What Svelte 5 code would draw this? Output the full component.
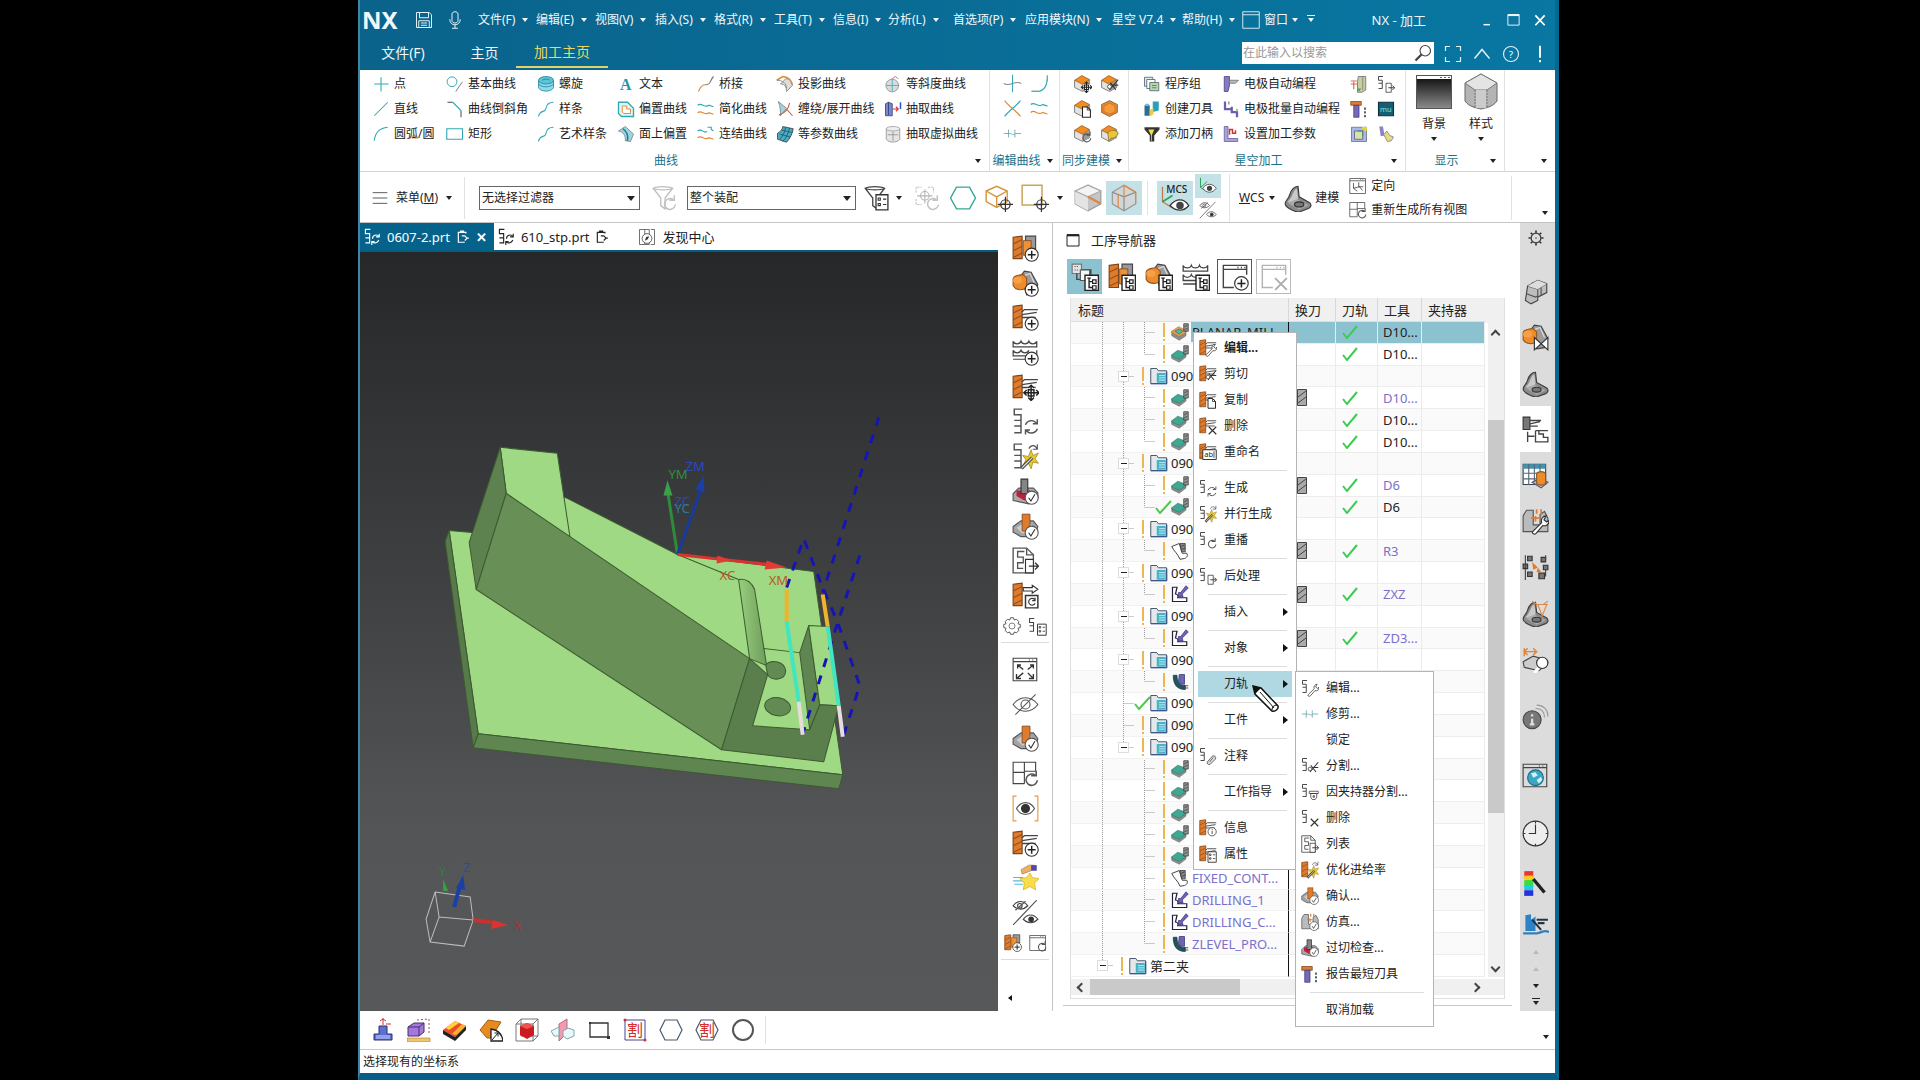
<script lang="ts">
  /**
   * App.svelte - CAM workbench: ribbon, part viewport, operation navigator
   * and the operation context menu with its tool path submenu.
   *
   * Icons are built from small shared parts on a 24 x 24 grid, so that
   * "tool lines plus" is a cutter with feed lines and a plus badge.
   */
  const parts: Record<string, string> = {
    // badges
    plus: '<circle cx="17.5" cy="17.5" r="5.8" fill="#fff" stroke="#333"/><path d="M17.5 14v7M14 17.5h7" stroke="#222" stroke-width="1.3"/>',
    check: '<circle cx="17.5" cy="17.5" r="5.8" fill="#fff" stroke="#555"/><path d="M14.8 17.5l2 3 3.6-6" stroke="#333"/>',
    info: '<circle cx="17.5" cy="17" r="5.5" fill="#fff" stroke="#333"/><path d="M17.5 13.5v1.5M17.5 16v4" stroke="#222"/>',
    cross: '<path d="M13 13l10 10M23 13L13 23" stroke="#333" stroke-width="1.6"/>',
    move: '<path d="M17 9.5l7 7-7 7-7-7z" fill="#fff"/><path d="M17 10v13.500M10.500 16.700h13.500M14.500 12.500l2.500-2.500 2.500 2.500M14.500 21l2.500 2.500 2.500-2.500M13 14.200l-2.500 2.500 2.500 2.500M21.500 14.200l2.500 2.500-2.500 2.500M14.500 14v5.500h5V14z" stroke="#222" stroke-width="1.3"/>',
    struct: '<path d="M12 10.500h11.500v13H12z" fill="#fff" stroke="#222" stroke-width="1.200"/><path d="M14 13h3M15.500 13v8h3M15.500 16h3" stroke="#222" stroke-width="1.200"/><path d="M18.500 14.500h3v3h-3zM18.500 19.500h3v3h-3z" stroke="#222"/>',
    page: '<path d="M12 10h6l4 4v9H12z" fill="#fff" stroke="#222" stroke-width="1.300"/><path d="M18 10v4h4" stroke="#222"/>',
    list: '<path d="M12 9h11v14H12z" fill="#fff" stroke="#333" stroke-width="1.200"/><path d="M14 12h2v2h-2zM14 17h2v2h-2zM18.500 13h3M18.500 18h3" stroke="#333"/>',
    name: '<path d="M5 9h18v13H5z" fill="#fff" stroke="#222" stroke-width="1.200"/><text x="7" y="19" font-size="10" fill="#222" stroke="none">ab</text><path d="M20 11v9" stroke="#222"/>',
    redo: '<path d="M22 14a5.500 5.500 0 0 0-10 1M22.500 10v4h-4M12.500 19.500a5.500 5.500 0 0 0 10-1M12 23.500v-4h4" stroke="#555" stroke-width="1.3"/>',
    turn: '<path d="M20.500 13.500a5 5 0 1 0 2 4.500M21.500 9.500v4.500h-4.500" stroke="#555" stroke-width="1.4"/>',
    swap: '<path d="M10 5h8V3l5 3.500L18 10V8h-8z" fill="#fff" stroke="#333"/><path d="M12 12h11v11H12z" fill="#fff" stroke="#333" stroke-width="1.300"/><path d="M20 15.500a3 3 0 1 0 .5 3.500M20.500 14v2.500H18" stroke="#333"/>',
    wrench: '<path d="M9.500 21l8-8c-1-3 1-6 4-6l-2 3.500 2.500 2 2-1.500c0 4-3 5.500-5.500 4.500l-6 7c-1.500 1.500-4 0-3-1.500z" fill="#fff" stroke="#333"/>',
    knife: '<path d="M12 20L23 7M15 14h8M13 11l7 9" stroke="#333" stroke-width="1.4"/><circle cx="12" cy="16" r="2.500" fill="#fff" stroke="#333"/>',
    out: '<path d="M12 11h7v12h-7z" fill="#fff" stroke="#333"/><path d="M15 17h8.500M20.500 14l3 3-3 3" stroke="#333" stroke-width="1.200"/>',
    spark: '<path d="M17 6l1.500 5 5-2-3 5 3 4-5-1-1.500 6-2.500-5-5 2 3-5-3-4 5 1z" fill="#e8c930" stroke="#967a10" stroke-width=".6"/><path d="M8.500 22.500L18 13" stroke="#444" stroke-width="3"/><path d="M9 22l9-9" stroke="#ddd" stroke-width="1.200"/><path d="M15 5c2-4 6-3 7 0M22.500 1v4.500h-4" stroke="#555"/>',
    holder: '<path d="M11 11h12v3H11zM13 14h8v5l-2 3h-4l-2-3zM16 17h2v2h-2z" fill="#fff" stroke="#333"/>',
    clip: '<path d="M11 20l7-8c3-1 5 1 4 4l-7 7c-3 1-5-1-4-3z" fill="#ddd" stroke="#444"/><path d="M14 20l5-6" stroke="#444"/>',
    target: '<circle cx="17.500" cy="17.500" r="4" stroke="#333"/><path d="M17.500 11v13M11 17.500h13" stroke="#333"/>',
    // bodies
    tool: '<path d="M1 2l8-1v20H1z" fill="#df7b2c" stroke="#7d451b"/><path d="M1 8l8-4M1 14l8-4M1 20l8-4" stroke="#94501d"/>',
    grip: '<path d="M12 1h9v11h-9z" fill="#9a9a9a" stroke="#444"/><path d="M10 5h7v13h-7z" fill="#ee9236" stroke="#7d451b" stroke-width=".7"/>',
    lines: '<path d="M9 7L11 5h12M9 9.500l13-2M9 12h12" stroke="#444" stroke-width="1.200"/>',
    snake: '<path d="M9 1H2v5h6v5H2M8 11v5H2M8 16v6H2" stroke="#555" stroke-width="1.300"/>',
    mini: '<path d="M8 2H2v5h5v4H2M7 11v7H2" stroke="#444" stroke-width="1.300"/>',
    waves: '<path d="M1 2v5h21V2M1 2c1 3 6 3 7 0 1 3 6 3 7 0 1 3 6 3 7 0M1 10v5h21v-5M1 10c1 3 6 3 7 0 1 3 6 3 7 0M1 18h11" stroke="#444" stroke-width="1.100"/>',
    solid: '<path d="M8 5l3-4 6 1 6 11-3 8-7 1z" fill="#9c9c9c" stroke="#444"/><path d="M11 5l5-2 4 9" fill="none" stroke="#ddd"/><path d="M1 8c0-3 9-5 10-3l2 2v8c-2 3-9 4-12-1z" fill="#ee8c2c" stroke="#98551b"/><ellipse cx="5" cy="9" rx="4" ry="3" fill="#f6a04a"/>',
    cut: '<path d="M1 14l5-5h13l4 4v5l-8 5-14-3z" fill="#aaa" stroke="#555"/><path d="M4 11h12v7l-5 2-7-4z" fill="#c01f3c"/><path d="M8 1h6v13H8z" fill="#858585" stroke="#333"/>',
    verify: '<path d="M1 12l7-5h11l4 5-3 9H8l-7-4z" fill="#a4a4a4" stroke="#555"/><path d="M4 13l5-3h8l3 4-3 4H9z" fill="#ccc"/><path d="M9 1h7v15H9z" fill="#df7b2c" stroke="#7d451b" stroke-width=".7"/>',
    report: '<path d="M1 1h12l6 6v16H1z" fill="#fff" stroke="#555" stroke-width="1.200"/><path d="M11 4H5v5h5v5H5v5h5M13 1v6h6" stroke="#555" stroke-width="1.200"/>',
    pages: '<path d="M1 1h8v8H1z" fill="#e4e4e4" stroke="#777"/><path d="M3 3h4M3 6h4" stroke="#555" stroke-dasharray="1 1"/><path d="M5 9v5h6M9 6h8v5" stroke="#444" stroke-width="1.200"/><path d="M8 6h8v9H8z" fill="#f5f5f5" stroke="#555"/>',
    frame: '<path d="M1 2h21v20H1z" stroke="#444" fill="none"/><path d="M1 5h21M15 3.500h1M18 3.500h1" stroke="#444"/>',
    window: '<path d="M22 10V2H2v19h9M2 5.500h20M14 3.800h1M17 3.800h1M20 3.800h1" stroke="#444" stroke-width="1.200"/>',
    arrows: '<path d="M5 11V8h3M4 16v4h4M19 16v4h-4M16 8h3v3M5 8l5 4M19 8l-5 4M4 20l6-5M19 20l-5-5" stroke="#333" stroke-width="1.200"/>',
    eye: '<path d="M1 12c6-8 16-8 22 0-6 8-16 8-22 0z" stroke="#555" fill="#fff"/><circle cx="12" cy="12" r="3.500" fill="#444" stroke="#555"/>',
    csyseye: '<path d="M2 1v13l6 4M2 14l9-8" stroke="#2aa35a" stroke-width="1.300"/><path d="M5 15c5-7 13-7 18 0-5 7-13 7-18 0z" stroke="#333" fill="#fff"/><circle cx="14" cy="15" r="3.500" fill="#444"/>',
    noeye: '<path d="M1 12c6-8 16-8 22 0-6 8-16 8-22 0z" stroke="#555"/><circle cx="12" cy="12" r="4" stroke="#555"/><path d="M3 21L21 3" stroke="#555"/>',
    eyes: '<path d="M1 6c4-5 9-5 13 0-4 4-9 4-13 0zM10 18c4-5 9-5 13 0-4 4-9 4-13 0z" stroke="#444"/><circle cx="7" cy="6" r="2" stroke="#444"/><circle cx="17" cy="18" r="2" fill="#333" stroke="#333"/><path d="M1 23L22 1M3 10L12 2" stroke="#555"/>',
    bracket: '<path d="M4 1H1v22h3M20 1h3v22h-3" stroke="#df9b48"/><path d="M4 12c4-7 12-7 16 0-4 7-12 7-16 0z" stroke="#555"/><circle cx="12" cy="12" r="3.500" fill="#333" stroke="#333"/>',
    views: '<path d="M11 21H1V2h20v8M1 11h10M11 2v19M11 10h10" stroke="#444"/>',
    star: '<path d="M1 12h9M1 15h9M2 18h8" stroke="#53b9d8"/><path d="M16 8l2 4 6 1-4 4 1 6-5-3-6 3 1-6-4-4 6-1z" fill="#f8dc4a" stroke="#d6a91b" stroke-width=".6"/><path d="M8 5l7-4h5l-3 5-8 3z" fill="#e8b064" stroke="#987043" stroke-width=".5"/><path d="M17 1h5v5h-5z" fill="#5648a8"/>',
    gear: '<path d="M10 1h4l1 3 3-1 3 3-1 3 3 1v4l-3 1 1 3-3 3-3-1-1 3h-4l-1-3-3 1-3-3 1-3-3-1v-4l3-1-1-3 3-3 3 1z" stroke="#555" stroke-width="1.300"/><circle cx="12" cy="12" r="4" stroke="#555"/>',
    cog: '<circle cx="12" cy="12" r="6.500" stroke="#333" stroke-width="1.600"/><circle cx="12" cy="12" r="1" fill="#333"/><path d="M12 2v3M12 19v3M2 12h3M19 12h3M5 5l2 2M17 17l2 2M5 19l2-2M17 7l2-2" stroke="#333" stroke-width="2.200"/>',
    // tree
    folder: '<path d="M1 2h8l2 3h11v17H1z" fill="#e4e8ea" stroke="#37475c" stroke-width="1.200"/><path d="M9 8h12v13H9z" fill="#45b4c9"/><path d="M12 11.500h8M12 14.500h8M12 17.500h8" stroke="#e8fbff"/><path d="M22.500 6v16.500H1" stroke="#35599a" stroke-width="1.300"/>',
    mill: '<path d="M1 13v5l10 5 9-7v-5z" fill="#8c8c8c" stroke="#666" stroke-width=".7"/><path d="M1 13l8-6 11 4v2l-9 6-10-4z" fill="#3fa893" stroke="#39746a" stroke-width=".8"/><path d="M17 1h6v11h-6z" fill="#999" stroke="#333"/><path d="M18 5l4-2M18 9l4-2" stroke="#333"/>',
    plane: '<path d="M1 11v6l10 6 9-6v-6z" fill="#8c8c8c" stroke="#666" stroke-width=".7"/><path d="M1 11l9-6 10 5v3l-9 5-10-5z" fill="#e6a24e" stroke="#a06a2c" stroke-width=".8"/><path d="M5 11l6-3 5 3-5 4z" fill="#4db9a6" stroke="#39746a"/><path d="M17 1h6v10h-6z" fill="#999" stroke="#333"/><path d="M18 5l4-2M18 9l4-2" stroke="#333"/>',
    contour: '<path d="M1 6l10-4 4 13 6 0c2 3 0 6-3 7l-6 1C9 15 4 13 1 6z" fill="#fff" stroke="#333" stroke-width="1.200"/><path d="M12 2h7v11h-5z" fill="#888" stroke="#333"/><path d="M13 6l5-2M14 10l5-2" stroke="#333"/>',
    drill: '<path d="M2 3h6L6 12c3 0 4 3 3 5h12v5H2z" fill="#fff" stroke="#22203a" stroke-width="1.600"/><path d="M20 1l3 3-8 8 1 4-6 0 0-6 3 0z" fill="#6d62b8" stroke="#40357c"/>',
    zlevel: '<path d="M3 3c0 10 3 19 16 19v-5C11 17 8 11 8 3z" fill="#22545d" stroke="#173b46"/><path d="M11 2h7v13h-5l-3-4z" fill="#6b66ae" stroke="#3a3380"/><path d="M17 17h6M19 20h4" stroke="#222"/>',
    // ribbon
    point: '<path d="M12 3v19M3 12h19" stroke="#2fa9b5" stroke-width="1.400"/>',
    line: '<path d="M3 21L21 3" stroke="#2fa9b5" stroke-width="1.400"/>',
    arc: '<path d="M3 21C4 12 9 4 21 3" stroke="#2fa9b5" stroke-width="1.400"/>',
    basic: '<circle cx="8" cy="9" r="6.500" stroke="#2fa9b5" stroke-width="1.300"/><path d="M13 22L22 9" stroke="#555"/>',
    chamfer: '<path d="M2 3h7M20 14v9" stroke="#444" stroke-width="1.300"/><path d="M9 3l11 11" stroke="#2fa9b5" stroke-width="1.500"/>',
    rect: '<path d="M1 5h21v14H1z" stroke="#2fa9b5" stroke-width="1.500"/>',
    helix: '<path d="M2 8v9c3 6 17 6 20 0V8z" fill="#8cdce8" stroke="#167c94"/><ellipse cx="12" cy="7" rx="10" ry="5" fill="#5cc5d6" stroke="#167c94"/><path d="M2 12c4 5 16 5 20 0M7 7c2-2 9-2 10 0" stroke="#167c94"/>',
    spline: '<path d="M2 22c2-10 9-4 10-11C13 5 17 3 22 3" stroke="#2fa9b5" stroke-width="1.500"/>',
    text: '<text x="4" y="20" font-family="Liberation Serif" font-weight="700" font-size="21" fill="#2395a8" stroke="none">A</text>',
    offset: '<path d="M2 3h12l8 8v11H6l-4-4z" stroke="#2fa9b5" stroke-width="1.800" fill="#e3f6f7"/><path d="M7 8h6v4h5v6H9l-2-2z" stroke="#e08a38" stroke-width="1.300" fill="#fff"/>',
    face: '<path d="M2 8l9-6 11 10-4 10-7-1C12 14 8 9 2 8z" fill="#9fd6de" stroke="#777"/><path d="M8 5c6 5 7 9 6 16" stroke="#177a98" stroke-width="2"/>',
    bridge: '<path d="M2 22c2-4 3-9 9-9" stroke="#e08a38" stroke-width="1.500"/><path d="M11 13c8 0 6-6 11-11" stroke="#777" stroke-width="1.500"/>',
    simplify: '<path d="M1 7c5-5 9 5 15 0l6 2" stroke="#2fa9b5" stroke-width="1.500"/><path d="M1 17c5-5 9 5 15 0l6 2" stroke="#e08a38" stroke-width="1.500"/>',
    link: '<path d="M1 8c5-5 9 5 12 0M14 3h5v3l3 2" stroke="#2fa9b5" stroke-width="1.500"/><path d="M1 17c5-5 9 5 15 0l6 2" stroke="#e08a38" stroke-width="1.500"/>',
    project: '<path d="M6 12c6 0 8 4 8 10l8-8c0-6-4-9-9-9z" fill="#ddd" stroke="#777"/><path d="M1 7l8-5c7 1 12 5 12 11" stroke="#e08a38" stroke-width="2"/><path d="M1 7c8 0 13 4 13 11" stroke="#777"/>',
    wrap: '<path d="M3 2l11 9-8 10c0-6 0-12-3-19z" fill="#9fd6de" stroke="#777"/><path d="M4 20c9-3 13-8 14-16M14 12l8 9" stroke="#c95c3a" stroke-width="1.500"/>',
    iso: '<path d="M2 11c4-2 7-6 7-9l14 3c-1 6-4 13-9 18L2 19z" fill="#48abc1" stroke="#333"/><path d="M13 3c-1 6-4 12-8 16M18 4c-1 6-4 13-9 18M8 7l14 3M5 12l14 4" stroke="#1f4f65"/>',
    slope: '<circle cx="11" cy="14" r="8.500" fill="#d7dbdc" stroke="#888"/><path d="M3 14h17M11 5v17" stroke="#2fa9b5"/><path d="M11 5l4-3 4 3" stroke="#c84040"/>',
    extract: '<path d="M2 5l4-2 5 2v16H2z" fill="#7d89cc" stroke="#27356f"/><path d="M6 3v17" stroke="#27356f"/><path d="M12 12h7M16 9l3 3-3 3" stroke="#d33" stroke-width="1.500"/><path d="M22 3v9" stroke="#2a52d0" stroke-width="2"/>',
    virtual: '<path d="M3 5v14c3 5 15 5 18 0V5" fill="#e5e5e5" stroke="#888"/><ellipse cx="12" cy="5" rx="9" ry="3" fill="#eee" stroke="#999"/><path d="M12 9v12M5 13h14" stroke="#888"/>',
    trim: '<path d="M1 12c8 5 14-5 22 0" stroke="#888" stroke-width="1.300"/><path d="M12 1v22" stroke="#2fa9b5" stroke-width="1.300"/>',
    fillet: '<path d="M2 22h7c10 0 13-8 13-20" stroke="#2fa9b5" stroke-width="1.500"/><path d="M2 22h7M22 2v7" stroke="#999" stroke-width="1.500"/>',
    split: '<path d="M2 2c6 8 14 12 20 20" stroke="#e08a38" stroke-width="1.500"/><path d="M22 2C16 10 8 14 2 22" stroke="#2fa9b5" stroke-width="1.500"/>',
    length: '<path d="M1 12h7c4 0 4 3 8 0h7M7 7v10M15 7v10" stroke="#5f9ea2"/>',
    block: '<path d="M2 8v9l10 5 9-5V8z" fill="#e3e3e3" stroke="#666"/><path d="M12 12v10l9-5V8z" fill="#9d9d9d"/><path d="M2 8l9-6 10 5-9 6z" fill="#f08d22" stroke="#a35f1c"/>',
    hexa: '<path d="M2 7l10-5 10 5v10l-10 5-10-5z" fill="#e58a2d" stroke="#7d5a35"/><path d="M5 9l7-4 7 4v7l-7 3-7-3z" fill="#f79a3c" stroke="#c97125"/>',
    blend: '<path d="M10 11c4-4 9-4 13 0-1 5-5 7-9 7l-3 4z" fill="#e6c63a" stroke="#857222"/>',
    program: '<path d="M2 3h11v12H2z" fill="#dceaec" stroke="#456"/><path d="M5 6h11v12H5z" fill="#fff" stroke="#456"/><path d="M9 10h12v11H9z" fill="#b7d8a8" stroke="#456"/><path d="M12 14h6M12 17h6" stroke="#2b6f8f"/>',
    create: '<path d="M2 7h7v14H2z" fill="#2e6f8f"/><path d="M13 2h8v12l-8 2z" fill="#28a0b8"/><path d="M9 13l5-2v8l-5 3z" fill="#f2c84c"/><path d="M3 5h5v3H3z" fill="#7db7d4"/>',
    cone: '<path d="M2 3h20v3l-7 8v8H9v-8L2 6z" fill="#333"/><path d="M7 6h8l-3 7v8h-1v-7z" fill="#e9e34a"/>',
    elec: '<path d="M3 2h7v12l-2 8H3z" fill="#8878c0" stroke="#46397c"/><path d="M10 7h12l-4 4h-8z" fill="#bbb" stroke="#666"/>',
    batch: '<path d="M4 2v10h8M13 9v7h7v7" stroke="#6c60ae" stroke-width="3"/><path d="M9 2v4M20 12v4" stroke="#999" stroke-width="2"/>',
    setup: '<path d="M3 2h5v16h13v4H3z" stroke="#5f55a4" fill="#a9a2d8"/><path d="M10 13V6h4v5h4V7" stroke="#c33" stroke-width="2"/>',
    cabinet: '<path d="M11 2h10v18l-5 3h-6V9z" fill="#c9cda0" stroke="#666"/><path d="M17 2v18" stroke="#777"/><path d="M1 8h8M1 12h9M5 9v10" stroke="#d66a53" stroke-width="1.500"/><path d="M9 18l6 0-3 4z" fill="#3cab4c"/>',
    bolt: '<path d="M1 2h14v5H1z" fill="#df7b2c" stroke="#7d451b"/><path d="M5 7h7v16H5z" fill="#746bb8" stroke="#40357c"/><path d="M20 10v3M20 15v3M20 20v3" stroke="#333" stroke-width="2"/>',
    mu: '<path d="M2 3h20v18H2z" fill="#155f75" stroke="#12303c" stroke-width="1.500"/><text x="4" y="16" font-size="10" fill="#7ce3e0" stroke="none">mu</text>',
    chip: '<path d="M2 3h20v19H2z" fill="#a9b8e8" stroke="#667"/><path d="M6 8h11v11H6z" fill="#d7e2a8" stroke="#557"/><path d="M10 8h7v7" stroke="#3a8a55"/><path d="M16 4h5v4" stroke="#e9d43c" stroke-width="3"/>',
    probe: '<path d="M3 2h5l2 12-5 1z" fill="#8b83c8"/><path d="M9 13l4-5 4 6 5 2-3 5-5 1z" fill="#e6dc84" stroke="#777"/>',
    // selection bar
    bars: '<path d="M1 4h22M1 12h22M1 20h22" stroke="#444" stroke-width="1.300"/>',
    funnel: '<path d="M2 3c4-2 14-2 18 0l-7 9v10l-4-3v-7zM2 3c4 2 14 2 18 0" stroke="#444" stroke-width="1.200"/>',
    corners: '<path d="M2 7V2h5M13 2h5v5M2 13v5h5" stroke="#444" stroke-dasharray="2 1"/><path d="M10 4v13M3 10h14" stroke="#333"/><circle cx="10" cy="10" r="4" stroke="#333"/>',
    hexline: '<path d="M6 2h12l5.500 10-5.500 10H6L.5 12z" stroke="#35a796" stroke-width="1.300"/>',
    wirecube: '<path d="M1 6l9-4 9 4v9l-9 5-9-5zM1 6l9 5 9-5M10 11v9" stroke="#d3933d" stroke-width="1.200"/>',
    square: '<path d="M1 1h17v17H1z" stroke="#caa65a" stroke-width="1.300"/>',
    graycube: '<path d="M1 6l11-5 11 5v11l-11 6-11-6z" fill="#c5c5c5" stroke="#999"/><path d="M1 6l11 5v12L1 17z" fill="#e4e4e4"/><path d="M1 6l11 5 11-5-11-5z" fill="#f4f4f4" stroke="#aaa"/><path d="M12 11l11 6" stroke="#d9884a" stroke-width="2"/>',
    glasscube: '<path d="M2 7l10-6 10 6v10l-10 6-10-6z" fill="#d3d6d6" stroke="#999"/><path d="M2 7l10 4 10-4M12 11v12" stroke="#888"/><path d="M7 9v11M12 1v10M12 1l10 6v10" stroke="#df8840"/>',
    mcs: '<text x="5" y="8" font-size="8" font-weight="500" fill="#222" stroke="none">MCS</text><path d="M2 3v12l8 5" stroke="#b87a4a"/><path d="M2 15l8-5" stroke="#2aa35a" stroke-width="1.300"/><path d="M8 18c5-6 11-6 15 0-4 5-10 5-15 0z" fill="#fff" stroke="#333"/><circle cx="16" cy="18" r="3" fill="#444"/>',
    bracketpart: '<path d="M1 17c0-3 3-4 4-8 1-4 4-7 7-7l1 9 9 5c2 2 1 4-1 5l-8 3c-4 0-12-4-12-7z" fill="#8a8a8a" stroke="#3d3d3d"/><path d="M3 15c4-2 5-11 8-11l1 8-2 5z" fill="#c9c9c9"/><path d="M3 16l8-3 10 5-8 4z" fill="#aaa"/><ellipse cx="13" cy="17.500" rx="4" ry="2.200" fill="#777" stroke="#333"/>',
    axis: '<path d="M6 8v7l5 4M6 15l8-2M13 7v6h6M14 13l4 5" stroke="#333"/>',
    // resource bar
    blocks: '<path d="M5 7l9-5 8 3v8l-8 4v3l-6 3-5-3z" fill="#bdbdbd" stroke="#444"/><path d="M5 7l9 3 8-5M14 10v7M4 14l8 3 2-1M9 4l8 3v8" stroke="#555"/><path d="M5 7l9-5 8 3-8 5z" fill="#ddd"/>',
    bowtie: '<path d="M11 12l12 11V12L11 23z" fill="#fff" stroke="#333"/>',
    navtree: '<path d="M1 1h6v11H1z" fill="#777" stroke="#333"/><path d="M7 4h10M7 7l9-2M7 9h7M5 14v9M5 18h6M12 13h11M12 13v10h11v-4h-4v-3h-4v-3" stroke="#444" stroke-width="1.200"/>',
    sheet: '<path d="M1 2h20v18H1z" fill="#fff" stroke="#345"/><path d="M1 2h20v4H1z" fill="#3f93ae"/><path d="M1 10h20M1 15h20M6 2v18M11 2v18M16 2v18" stroke="#567"/><path d="M9 18l6-3 8 3-6 5z" fill="#bbb" stroke="#557"/><path d="M13 10c2-2 6-2 8 0v9c-2 2-6 2-8 0z" fill="#ee8c2c" stroke="#8b5a2a"/>',
    machine: '<path d="M1 7l3-5h6v13h6V6l4-3 3 6v12H1z" fill="#bbb" stroke="#555"/><path d="M8 9h7M12 7v5M13 1v4M17 1v5" stroke="#e07a30" stroke-width="1.500"/>',
    nodes: '<path d="M5 2h4v4H5zM1 9h4v4H1zM5 16h4v4H5zM17 3h4v4h-4zM19 10h4v4h-4zM15 17h5v5h-5z" fill="#777" stroke="#333"/><path d="M3 1v22M21 1v4M21 14v6" stroke="#444"/><path d="M9 7l5 5-4 2zM14 12l4 5-5-1z" fill="#df7b2c"/>',
    rays: '<path d="M14 4l4 10 4-10zM9 1l4 3M23 1l-4 3M13 4h10" stroke="#df8a48"/>',
    inspect: '<path d="M1 14l9-5 10 3 3 3-8 7-13-3z" fill="#ccc" stroke="#444"/><path d="M2 2v7M2 5h11M10 2l3 3-3 3M5 2L2 5l3 3" stroke="#e58435" stroke-width="1.300"/><path d="M15 19l-4 5" stroke="#fff" stroke-width="3"/><circle cx="18" cy="15" r="5" fill="#fff" stroke="#333"/>',
    infoball: '<circle cx="9" cy="14" r="8" fill="#777" stroke="#444"/><path d="M9 9v2M9 13v5M7 18h4" stroke="#ddd" stroke-width="2"/><path d="M12 4c5 0 8 3 8 8M13 1c6 0 10 4 10 10" stroke="#999"/>',
    globe: '<circle cx="12" cy="14" r="7" fill="#3aa7c6" stroke="#176b8c"/><path d="M8 10l4-1 2 3-4 2zM13 16l4-3 1 3-3 3z" fill="#d3f1f6"/>',
    clock: '<circle cx="12" cy="12" r="11" fill="#eee" stroke="#333"/><path d="M12 4v8H6M12 1v2M12 21v2M1 12h2M21 12h2" stroke="#333"/>',
    rainbow: '<path d="M2 1h8v6H2z" fill="#e33"/><path d="M2 5h8v5H2z" fill="#fc2"/><path d="M2 9h8v6H2z" fill="#3d4"/><path d="M2 14h8v4H2z" fill="#2cd"/><path d="M2 18h8v5H2z" fill="#23d"/><path d="M10 8l10 12" stroke="#222" stroke-width="3"/>',
    blueprint: '<path d="M3 16V2l5-1v5l4-3v13z" fill="#2d83c8"/><path d="M9 6l8 9M13 6h10M14 9h6" stroke="#234" stroke-width="1.800"/><path d="M1 18h12c5 0 6-4 11-1" stroke="#397fb5" stroke-width="2"/>',
    // bottom bar
    stand: '<path d="M8 8h8v8h5v6H3v-6h5z" fill="#5f6fd0" stroke="#27356f"/><path d="M5 17h14v4H5z" fill="#93a0ea"/><path d="M12 0v7M9 3l3-2 3 2M15 6h5" stroke="#c33"/>',
    boxdim: '<path d="M1 9l6-4h10v9l-5 4H1z" fill="#a678dd" stroke="#443166"/><path d="M1 9h11v9M12 9l5-4" stroke="#443166"/><path d="M0 20h23v4H0z" fill="#f2c46d" stroke="#a87d2c" stroke-width=".600"/><path d="M10 2l12-1v14" stroke="#955" stroke-dasharray="2 2"/>',
    stripe: '<path d="M0 12L12 3l11 5-11 11z" fill="#ee4d2c"/><path d="M3 10l9-7 4 2-10 7z" fill="#ffd33b"/><path d="M9 16l10-10 4 2-10 9z" fill="#f5b52c"/><path d="M0 12l12 7L23 8v4L12 23 0 16z" fill="#222"/>',
    measure: '<path d="M1 12L9 2l13 2-5 8v8H8z" fill="#e78b20" stroke="#a35f12"/><path d="M12 11v12h12c-1-8-5-11-12-12z" fill="#fff" stroke="#222" stroke-width="1.300"/><path d="M13 22l6-7M15.500 15H19v3.500" stroke="#222"/>',
    redcube: '<path d="M1 6l5-5h17v17l-5 5H1zM1 6h17v17M18 6l5-5M6 1v17h17" stroke="#777"/><path d="M5 8l7-3 7 3v9l-7 4-7-4z" fill="#cb1a20"/><path d="M5 8l7 3 7-3-7-3z" fill="#ee5450"/>',
    planes: '<path d="M8 6l8-5v14l-8 8z" fill="#f49ab0" stroke="#b76d80"/><path d="M0 13l8-4v9H3zM12 13l5-3 6 2v6l-7 3-4-3z" fill="#eaf8fa" stroke="#7fa8ae"/>',
    rectline: '<path d="M3 5h18v14H3z" stroke="#333" stroke-width="1.300"/><path d="M2 4h2v2H2zM20 18h3v3h-3z" fill="#333"/>',
    cutrect: '<path d="M2 2h20v20H2z" stroke="#449"/><circle cx="2" cy="2" r="1.500" fill="#c33"/><circle cx="22" cy="22" r="1.500" fill="#c33"/><text x="4" y="18" font-size="16" fill="#d22c2c" stroke="none">割</text>',
    hexdark: '<path d="M6 2h12l5 10-5 10H6L1 12z" stroke="#4a5870" stroke-width="1.200"/>',
    cuthex: '<text x="4" y="18" font-size="16" fill="#d22c2c" stroke="none">割</text>',
    ring: '<circle cx="12" cy="12" r="10" stroke="#555" stroke-width="2"/>',
    // title bar
    save: '<path d="M2 2h17l3 3v17H2zM6 2v7h12V2M5 22v-9h14v9M8 16h8M8 19h8" stroke="#e8f3f8" stroke-width="1.300"/>',
    mic: '<path d="M8 4c0-4 8-4 8 0v9c0 4-8 4-8 0zM5 11c0 10 14 10 14 0M12 18v5M8 23h8" stroke="#e8f3f8" stroke-width="1.300"/>',
    pane: '<path d="M1 1h22v22H1zM1 5h22" stroke="#e8f3f8" stroke-width="1.200"/>',
    minus: '<path d="M6 20h11" stroke="#fff" stroke-width="2.500"/>',
    box: '<path d="M3 4h18v17H3z" stroke="currentColor" stroke-width="1.500"/><path d="M3 5h18" stroke="currentColor" stroke-width="3"/>',
    close: '<path d="M4 4l16 17M20 4L4 21" stroke="#fff" stroke-width="3"/>',
    full: '<path d="M2 8V2h6M16 2h6v6M22 16v6h-6M8 22H2v-6" stroke="#dff0f7" stroke-width="1.600"/>',
    up: '<path d="M2 18L12 6l10 12" stroke="#dff0f7" stroke-width="2"/>',
    help: '<circle cx="12" cy="12" r="10" stroke="#dff0f7" stroke-width="1.500"/><text x="9" y="17" font-size="13" fill="#fff" stroke="none">?</text>',
    bang: '<path d="M12 1v16M12 20v3" stroke="#fff" stroke-width="2.500"/>',
    lens: '<circle cx="15" cy="9" r="7" stroke="#444" stroke-width="1.500"/><path d="M10 14l-8 8" stroke="#444" stroke-width="3"/>',
    doc: '<path d="M17 6V4H4v17h11M8 4V2h5v2M10 10h5l4 4-4 4M17 14h5" stroke="currentColor" stroke-width="2"/>',
    sync: '<path d="M9 2H2v6h6v6H2M8 14v7H2M21 12a5 5 0 0 0-9 3M21.500 8v4.500h-4.500M12 20c3 2 7 1 9-3M11 24v-5h4" stroke="currentColor" stroke-width="1.600"/>',
    discover: '<path d="M2 2h7v20H2zM9 2h6v20H9M17 2h5v20h-5" stroke="#444"/><circle cx="12" cy="14" r="6.500" fill="#fff" stroke="#333"/><path d="M9 17l2-5 4-1-2 4z" fill="#333"/>',
  };

  const art = (name: string) => name.split(' ').map((p) => parts[p] ?? '').join('');

  const menus = ['文件(F)', '编辑(E)', '视图(V)', '插入(S)', '格式(R)', '工具(T)', '信息(I)', '分析(L)', '首选项(P)', '应用模块(N)', '星空 V7.4', '帮助(H)'];

  // ribbon grids run row by row
  const curves = [
    ['point', '点'], ['basic', '基本曲线'], ['helix', '螺旋'], ['text', '文本'], ['bridge', '桥接'], ['project', '投影曲线'], ['slope', '等斜度曲线'],
    ['line', '直线'], ['chamfer', '曲线倒斜角'], ['spline', '样条'], ['offset', '偏置曲线'], ['simplify', '简化曲线'], ['wrap', '缠绕/展开曲线'], ['extract', '抽取曲线'],
    ['arc', '圆弧/圆'], ['rect', '矩形'], ['spline', '艺术样条'], ['face', '面上偏置'], ['link', '连结曲线'], ['iso', '等参数曲线'], ['virtual', '抽取虚拟曲线'],
  ];
  const editCurves = ['trim', 'fillet', 'split', 'simplify', 'length'];
  const syncTools = ['block move', 'block knife', 'block page', 'hexa', 'block turn', 'block blend'];
  const starTools = [
    ['program', '程序组'], ['elec', '电极自动编程'], ['cabinet', ''], ['mini out', ''],
    ['create', '创建刀具'], ['batch', '电极批量自动编程'], ['bolt', ''], ['mu', ''],
    ['cone', '添加刀柄'], ['setup', '设置加工参数'], ['chip', ''], ['probe', ''],
  ];

  const sideTop = ['tool grip plus', 'solid plus', 'tool lines plus', 'waves plus', 'tool lines move', 'snake redo', 'snake spark', 'cut check', 'verify check', 'report out', 'tool swap'];
  const sideBottom = ['frame arrows', 'noeye', 'verify check', 'views turn', 'bracket', 'tool lines plus', 'star', 'eyes'];
  const resources = ['blocks', 'solid bowtie', 'bracketpart', 'navtree', 'sheet', 'machine wrench', 'nodes', 'bracketpart rays', 'inspect'];
  const resourcesLow = ['infoball', 'frame globe', 'clock', 'rainbow', 'blueprint'];
  const bottomTools = ['stand', 'boxdim', 'stripe', 'measure', 'redcube', 'planes', 'rectline', 'cutrect', 'hexdark', 'cuthex hexdark', 'ring'];

  type Row = {
    depth: number; icon: string; name: string; ok?: boolean; open?: boolean; last?: boolean;
    tail?: boolean; change?: boolean; path?: boolean; tool?: string; blue?: boolean; selected?: boolean;
  };
  const group = (more = {}): Row => ({ depth: 1, icon: 'folder', name: '090', open: true, ...more });
  const op = (icon: string, more = {}): Row => ({ depth: 2, icon, name: '', ...more });

  const rows: Row[] = [
    op('plane', { name: 'PLANAR_MILL', selected: true, path: true, tool: 'D10...' }),
    op('mill', { path: true, tool: 'D10...', last: true }),
    group(),
    op('mill', { change: true, path: true, tool: 'D10...', blue: true }),
    op('mill', { path: true, tool: 'D10...' }),
    op('mill', { path: true, tool: 'D10...', last: true }),
    group(),
    op('mill', { change: true, path: true, tool: 'D6', blue: true }),
    op('mill', { ok: true, path: true, tool: 'D6', last: true }),
    group(),
    op('contour', { change: true, path: true, tool: 'R3', blue: true, last: true }),
    group(),
    op('drill', { change: true, path: true, tool: 'ZXZ', blue: true, last: true }),
    group(),
    op('drill', { change: true, path: true, tool: 'ZD3...', blue: true, last: true }),
    group(),
    op('zlevel', { last: true }),
    group({ open: false, ok: true }),
    group({ open: false }),
    group({ last: true }),
    op('mill', { tail: true }),
    op('mill', { tail: true }),
    op('mill', { tail: true }),
    op('mill', { tail: true }),
    op('mill', { tail: true }),
    op('contour', { name: 'FIXED_CONT...', blue: true, tail: true }),
    op('drill', { name: 'DRILLING_1', blue: true, tail: true }),
    op('drill', { name: 'DRILLING_C...', blue: true, tail: true }),
    op('zlevel', { name: 'ZLEVEL_PRO...', blue: true, tail: true, last: true }),
    { depth: 0, icon: 'folder', name: '第二夹', open: true },
  ];

  // dotted connector lines left of a row
  function guides(r: Row) {
    const end = (on?: boolean) => (on ? 10 : 22);
    if (r.depth === 0) return 'M31.5 0V10M31.5 10.5H42';
    if (r.depth === 1) return `M31.5 0V22M52.5 0V${end(r.last)}M52.5 10.5H63`;
    return `M31.5 0V22${r.tail ? '' : 'M52.5 0V22'}M73.5 0V${end(r.last)}M73.5 10.5H84`;
  }

  // null is a separator
  const contextMenu = [
    ['tool lines wrench', '编辑...'], ['tool lines knife', '剪切'], ['tool lines page', '复制'], ['tool lines cross', '删除'], ['tool lines name', '重命名'], null,
    ['mini redo', '生成'], ['mini spark', '并行生成'], ['mini turn', '重播'], null,
    ['mini out', '后处理'], null,
    ['', '插入', 'sub'], null, ['', '对象', 'sub'], null, ['', '刀轨', 'sub'], null, ['', '工件', 'sub'], null,
    ['mini clip', '注释'], null, ['', '工作指导', 'sub'], null,
    ['tool lines info', '信息'], ['tool lines list', '属性'],
  ];
  const pathMenu = [
    ['mini wrench', '编辑...'], ['length', '修剪...'], ['', '锁定'], ['mini knife', '分割...'], ['mini holder', '因夹持器分割...'], ['mini cross', '删除'],
    ['report out', '列表'], ['tool spark', '优化进给率'], ['verify check', '确认...'], ['machine check', '仿真...'], ['cut check', '过切检查...'], ['bolt', '报告最短刀具'], null,
    ['', '取消加载'],
  ];

  let search = $state('');
  let active = $state('刀轨');
</script>

{#snippet icon(name: string, size = 18)}
  <svg class="icon" width={size} height={size} viewBox="0 0 24 24" fill="none" aria-hidden="true">{@html art(name)}</svg>
{/snippet}

<div class="desktop">
  <div class="window">
    <header>
      <div class="titlebar">
        <strong class="logo">NX</strong>
        <button class="quick" aria-label="保存">{@render icon('save', 18)}</button>
        <button class="quick" aria-label="语音">{@render icon('mic', 18)}</button>
        <nav class="menus">
          {#each menus as m}
            <button>{m}<i class="caret"></i></button>
          {/each}
          <button class="panes">{@render icon('pane', 18)}窗口<i class="caret"></i></button>
          <button aria-label="更多"><i class="caret over"></i></button>
        </nav>
        <span class="app-title">NX - 加工</span>
        <div class="controls">
          <button aria-label="最小化">{@render icon('minus', 14)}</button>
          <button aria-label="最大化">{@render icon('box', 15)}</button>
          <button aria-label="关闭">{@render icon('close', 14)}</button>
        </div>
      </div>
      <div class="tabbar">
        <button class="file">文件(F)</button>
        <button class="home">主页</button>
        <button class="cam current">加工主页</button>
        <div class="search">
          <input type="text" aria-label="搜索" placeholder="在此输入以搜索" bind:value={search} />
          <button aria-label="查找">{@render icon('lens', 18)}</button>
        </div>
        <div class="tab-tools">
          <button aria-label="全屏">{@render icon('full', 18)}</button>
          <button aria-label="折叠">{@render icon('up', 18)}</button>
          <button aria-label="帮助">{@render icon('help', 18)}</button>
          <button aria-label="提示">{@render icon('bang', 18)}</button>
        </div>
      </div>
    </header>

    <section class="ribbon">
      <div class="group curve">
        <div class="tools">
          {#each curves as [name, label]}
            <button>{@render icon(name)}{label}</button>
          {/each}
        </div>
        <footer>曲线<i class="caret"></i></footer>
      </div>
      <div class="group edit">
        <div class="tools">
          {#each editCurves as name}
            <button aria-label="编辑曲线">{@render icon(name, 19)}</button>
          {/each}
        </div>
        <footer>编辑曲线<i class="caret"></i></footer>
      </div>
      <div class="group sync">
        <div class="tools">
          {#each syncTools as name}
            <button aria-label="同步建模">{@render icon(name, 19)}</button>
          {/each}
        </div>
        <footer>同步建模<i class="caret"></i></footer>
      </div>
      <div class="group stars">
        <div class="tools">
          {#each starTools as [name, label]}
            <button aria-label={label || '星空加工'}>{@render icon(name)}{label}</button>
          {/each}
        </div>
        <footer>星空加工<i class="caret"></i></footer>
      </div>
      <div class="group display">
        <div class="big">
          <button>
            <svg width="36" height="42" viewBox="0 0 36 42">
              <defs>
                <linearGradient id="shade" x2="0" y2="1">
                  <stop offset="0" stop-color="#161616" /><stop offset="1" stop-color="#8a8a8a" />
                </linearGradient>
              </defs>
              <rect x=".5" y="4.500" width="35" height="33" fill="#fff" stroke="#555" />
              <rect x="1" y="8" width="34" height="29" fill="url(#shade)" />
              <path d="M24 6.500h2M28 6.500h2M32 6.500h2" stroke="#666" />
            </svg>
            背景<i class="caret"></i>
          </button>
          <button>
            <svg width="36" height="42" viewBox="0 0 36 42">
              <path d="M2 12L18 3l16 9v18c-4 6-12 7-16 8-4-1-12-2-16-8z" fill="#b4b4b4" stroke="#666" />
              <path d="M2 12L18 3l16 9-10 7H12z" fill="#e4e4e4" stroke="#777" />
              <path d="M13 19h10v18H13z" fill="#ccc" /><path d="M12 19v17M24 19v17" stroke="#777" stroke-dasharray="2 1" />
            </svg>
            样式<i class="caret"></i>
          </button>
        </div>
        <footer>显示<i class="caret"></i></footer>
      </div>
      <div class="group rest"><footer><i class="caret"></i></footer></div>
    </section>

    <section class="selection">
      <button class="main-menu">{@render icon('bars', 16)}<span>菜单(<u>M</u>)</span><i class="caret"></i></button>
      <label class="combo filter">
        <select aria-label="选择过滤器"><option>无选择过滤器</option></select><i class="caret"></i>
      </label>
      <button class="dim funnel" aria-label="重置过滤器">{@render icon('funnel turn', 26)}</button>
      <label class="combo scope">
        <select aria-label="选择范围"><option>整个装配</option></select><i class="caret"></i>
      </label>
      <button class="tile list" aria-label="常规过滤器">{@render icon('funnel list', 26)}</button>
      <i class="caret"></i>
      <div class="tiles">
        <button class="tile dim" aria-label="定位">{@render icon('corners turn', 26)}</button>
        <button class="tile" aria-label="多边形">{@render icon('hexline', 26)}</button>
        <button class="tile" aria-label="体">{@render icon('wirecube target', 28)}</button>
        <button class="tile" aria-label="矩形">{@render icon('square target', 28)}</button>
      </div>
      <i class="caret"></i>
      <div class="tiles shades">
        <button class="tile" aria-label="着色">{@render icon('graycube', 28)}</button>
        <button class="tile on" aria-label="透视">{@render icon('glasscube', 28)}</button>
      </div>
      <div class="mcs">
        <button class="tile on" aria-label="MCS">{@render icon('mcs', 30)}</button>
        <div class="pair">
          <button class="on" aria-label="显示">{@render icon('csyseye', 18)}</button>
          <button aria-label="隐藏">{@render icon('eyes', 18)}</button>
        </div>
      </div>
      <button class="wcs"><span><u>W</u>CS</span><i class="caret"></i></button>
      <button class="model">{@render icon('bracketpart', 28)}建模</button>
      <div class="orient">
        <button>{@render icon('frame axis', 18)}定向</button>
        <button>{@render icon('views turn', 18)}重新生成所有视图</button>
      </div>
      <div class="end"><i class="caret"></i></div>
    </section>

    <main>
      <section class="stage">
        <div class="docs">
          <button class="doc open">{@render icon('sync', 17)}0607-2.prt{@render icon('doc', 14)}<b>✕</b></button>
          <button class="doc">{@render icon('sync', 17)}610_stp.prt{@render icon('doc', 14)}</button>
          <button class="doc find">{@render icon('discover', 18)}发现中心</button>
        </div>
        <svg class="viewport" viewBox="360 252 637 758" preserveAspectRatio="xMidYMid slice">
          <defs>
            <linearGradient id="sky" x2="0" y2="1">
              <stop offset="0" stop-color="#252628" />
              <stop offset=".5" stop-color="#434446" />
              <stop offset=".75" stop-color="#535556" />
              <stop offset="1" stop-color="#575859" />
            </linearGradient>
            <linearGradient id="round"><stop offset="0" stop-color="#97cf7c" /><stop offset="1" stop-color="#6f9d5b" /></linearGradient>
          </defs>
          <rect x="300" y="240" width="760" height="780" fill="url(#sky)" />

          <!-- part -->
          <g stroke="#3d5a31" stroke-width="1" stroke-linejoin="round">
            <path d="M449 530l23 2 93-35 112 57 136 17 29 203-364-41z" fill="#9fd983" />
            <path d="M449 530l-4 11 28 206 5-14z" fill="#577a4a" />
            <path d="M478 733l364 41-4 14-365-41z" fill="#5f8650" />
            <path d="M500 447l57 6 13 86-64-46z" fill="#9fd983" />
            <path d="M500 447l6 46-30 96-7-47z" fill="#5d814f" />
            <path d="M506 493l243 165-28 91-245-160z" fill="#688f56" />
            <path d="M808 625l-9 27 10 77 10-25z" fill="#5f8650" />
            <path d="M808 625l19 1 11 79-19-1z" fill="#9fd983" />
            <path d="M749 658l18 16-15 51 57 4 10-25 19 1-15 56-102-12z" fill="#5b7f4c" />
            <path d="M738 579c8-1 13 3 16 10l12 76-17-7z" fill="url(#round)" />
            <path d="M677 554l61 25M763 648l36 4" fill="none" />
            <path d="M765 664c6-6 19-3 20 6 0 10-15 11-18 4z" fill="#628a53" />
            <ellipse cx="777" cy="706" rx="13" ry="9" fill="#628a53" transform="rotate(10 777 706)" />
          </g>

          <!-- tool path -->
          <g fill="none" stroke-width="4">
            <path d="M878 417l-56 175M786 587l17-49 18 47 16 37 22 63-17 52M859 555l-22 67-35 111" stroke="#1515b4" stroke-dasharray="9 9" stroke-width="3" />
            <path d="M786 589v32M822 594l5 32" stroke="#efb42c" />
            <path d="M786 621l12 80M827 626l11 79" stroke="#40e6c0" />
            <path d="M798 701l4 33M838 705l4 31" stroke="#e6dcdc" />
          </g>

          <!-- coordinate systems -->
          <g stroke-width="3" fill="none">
            <path d="M677 554l-10-64" stroke="#2f8a3b" />
            <path d="M677 554l24-66" stroke="#173a9c" />
            <path d="M677 554l100 11" stroke="#d7332f" />
          </g>
          <path d="M667 480l5 15h-9z" fill="#3aa048" />
          <path d="M703 475l1 17-9-3z" fill="#1b3fa8" />
          <path d="M786 567l-22 2 2-9zM731 560l-15 3 1-8z" fill="#e23b33" />
          <g font-size="13">
            <text x="668" y="479" fill="#2f9140">YM</text>
            <text x="685" y="471" fill="#2b49bd">ZM</text>
            <text x="674" y="506" fill="#2b49bd">ZC</text>
            <text x="674" y="513" fill="#2b7b92">YC</text>
            <text x="719" y="579" fill="#b9592c">XC</text>
            <text x="768" y="584" fill="#b9592c">XM</text>
          </g>

          <!-- view triad -->
          <path d="M435 891l35 5 3 23-9 26-34-4-4-23zM435 891l4 25-9 25M439 916l34 3" fill="none" stroke="#bdbdbd" />
          <path d="M454 906l6-22" stroke="#1b3fa8" stroke-width="4" />
          <path d="M463 874l2 15-9-2z" fill="#1b3fa8" />
          <path d="M443 878l5 12h-5z" fill="#3aa048" />
          <path d="M473 919l22 3" stroke="#c9302f" stroke-width="4" />
          <path d="M508 924l-17 4 2-9z" fill="#d9342f" />
          <g font-size="12">
            <text x="439" y="875" fill="#2f8040">Y</text>
            <text x="463" y="871" fill="#3246b0">Z</text>
            <text x="514" y="929" fill="#b03030">X</text>
          </g>
        </svg>
      </section>

      <aside class="side">
        <div class="stack high">
          {#each sideTop as name}
            <button aria-label="工序工具">{@render icon(name, 27)}</button>
          {/each}
        </div>
        <div class="twin">
          <button aria-label="设置">{@render icon('gear', 18)}</button>
          <button aria-label="程序列表">{@render icon('mini list', 19)}</button>
        </div>
        <hr />
        <div class="stack low">
          {#each sideBottom as name}
            <button aria-label="视图工具">{@render icon(name, 27)}</button>
          {/each}
        </div>
        <div class="twin">
          <button aria-label="新建">{@render icon('tool grip plus', 18)}</button>
          <button aria-label="刷新">{@render icon('frame turn', 18)}</button>
        </div>
        <hr />
        <i class="caret left"></i>
      </aside>

      <section class="navigator">
        <h2>{@render icon('box', 16)}工序导航器</h2>
        <div class="nav-tools">
          <button class="on" aria-label="程序顺序视图">{@render icon('pages struct', 28)}</button>
          <button aria-label="机床视图">{@render icon('tool grip struct', 28)}</button>
          <button aria-label="几何视图">{@render icon('solid struct', 28)}</button>
          <button aria-label="加工方法视图">{@render icon('waves struct', 28)}</button>
          <button class="boxed" aria-label="新建列">{@render icon('window plus', 28)}</button>
          <button class="boxed off" aria-label="移除列">{@render icon('window cross', 28)}</button>
        </div>
        <div class="table-box">
          <div class="table-main">
            <table>
              <colgroup><col class="c1" /><col class="c2" /><col class="c3" /><col class="c4" /><col /></colgroup>
              <thead>
                <tr><th>标题</th><th>换刀</th><th>刀轨</th><th>工具</th><th>夹持器</th></tr>
              </thead>
              <tbody>
                {#each rows as r}
                  <tr class:selected={r.selected}>
                    <td class="title">
                      <div class="node">
                        <svg class="guides" width={45 + 21 * r.depth} height="21" fill="none">
                          <path d={guides(r)} stroke="#999" stroke-dasharray="1 1" />
                          {#if r.open}
                            <rect x={26.5 + 21 * r.depth} y="5.500" width="10" height="10" fill="#fff" stroke="#ddd" />
                            <path d="M{29 + 21 * r.depth} 10.5h6" stroke="#222" />
                          {/if}
                        </svg>
                        <svg class="state" width="12" height="20" fill="none">
                          {#if r.ok}
                            <path d="M-2 11l4 5L13 4" stroke="#4cc94c" stroke-width="2" />
                          {:else}
                            <path d="M6 1v14M6 17v2" stroke="#edb650" stroke-width="2" />
                          {/if}
                        </svg>
                        {@render icon(r.icon, 18)}
                        <span class="name" class:blue={r.blue}>{r.name}</span>
                      </div>
                    </td>
                    <td>
                      {#if r.change}
                        <svg class="swap" width="10" height="17" fill="#aaa" stroke="#444"><path d="M.5.500h9v16h-9zM1 8l8-6M1 14l8-6" /></svg>
                      {/if}
                    </td>
                    <td>
                      {#if r.path}
                        <svg class="tick" width="16" height="14" fill="none"><path d="M1 8l4 5L15 1" stroke="#3ecb55" stroke-width="2" /></svg>
                      {/if}
                    </td>
                    <td class="tool" class:blue={r.blue}>{r.tool ?? ''}</td>
                    <td></td>
                  </tr>
                {/each}
              </tbody>
            </table>
            <div class="vbar"><i class="chev up"></i><span></span><i class="chev down"></i></div>
          </div>
          <div class="hbar"><i class="chev back"></i><span></span><i class="chev next"></i></div>
        </div>
        <hr />

        <menu class="popup context">
          {#each contextMenu as item, i}
            {#if item}
              <li>
                <button class:active={active === item[1]} class:strong={i === 0}>
                  {@render icon(item[0], 18)}{item[1]}
                  {#if item[2]}<i class="caret right"></i>{/if}
                </button>
              </li>
            {:else}
              <li class="sep"></li>
            {/if}
          {/each}
        </menu>

        <menu class="popup submenu">
          {#each pathMenu as item}
            {#if item}
              <li><button>{@render icon(item[0], 18)}{item[1]}</button></li>
            {:else}
              <li class="sep"></li>
            {/if}
          {/each}
        </menu>

        <svg class="pencil" width="28" height="28" viewBox="0 0 28 28">
          <path d="M1 1l8 2 17 18c1 3-3 6-6 5L3 9z" fill="#fff" stroke="#111" stroke-width="1.500" />
          <path d="M1 1l8 2-6 6z" fill="#111" />
          <path d="M8 7l14 16M20 25c0-3 2-5 5-5" fill="none" stroke="#111" />
        </svg>
      </section>

      <aside class="resources">
        <button aria-label="资源条选项">{@render icon('cog', 18)}</button>
        <div class="res-high">
          {#each resources as name}
            <button class:current={name === 'navtree'} aria-label="资源">{@render icon(name, 27)}</button>
          {/each}
        </div>
        <div class="res-low">
          {#each resourcesLow as name, i}
            <button class:tight={i > 2} aria-label="资源">{@render icon(name, 27)}</button>
          {/each}
        </div>
        <div class="res-end"><i class="caret rise"></i><i class="caret rise"></i><i class="caret"></i><i class="caret over"></i></div>
      </aside>
    </main>

    <section class="bottom">
      <div class="bottom-tools">
        {#each bottomTools as name}
          <button aria-label="快捷工具">{@render icon(name, 24)}</button>
        {/each}
      </div>
      <i class="caret"></i>
    </section>
    <div class="status">选择现有的坐标系</div>
  </div>
</div>

<style>
  :global(body) {
    background: #000;
  }

  .desktop {
    display: grid;
    grid-template-columns: 358fr 1201fr 361fr;
    min-height: 100vh;
    font-family: 'Noto Sans', 'Noto Sans CJK SC', sans-serif;
    font-size: 12px;
    line-height: 18px;
    color: #222;
  }

  .window {
    grid-column: 2;
    display: flex;
    flex-direction: column;
    min-width: 0;
    box-sizing: border-box;
    border-left: 2px solid #3d86a6;
    border-right: 4px solid #06688f;
    border-bottom: 8px solid #055f89;
    background: #fff;
  }

  button {
    display: flex;
    align-items: center;
    justify-content: center;
    margin: 0;
    padding: 0;
    border: 0;
    background: none;
    color: inherit;
    font: inherit;
    white-space: nowrap;
    cursor: pointer;
  }

  .icon {
    flex: none;
    display: block;
  }

  .caret {
    flex: none;
    width: 0;
    height: 0;
    border: 3px solid transparent;
    border-top: 4px solid currentColor;
    border-bottom: 0;
  }

  .caret.over {
    position: relative;
  }

  .caret.over::before {
    content: '';
    position: absolute;
    left: -4px;
    top: -7px;
    width: 8px;
    height: 1px;
    background: currentColor;
  }

  .caret.right {
    border: 4px solid transparent;
    border-left: 5px solid #111;
    border-right: 0;
  }

  .caret.left {
    border: 3px solid transparent;
    border-right: 4px solid #111;
    border-left: 0;
  }

  .caret.rise {
    border: 3px solid transparent;
    border-bottom: 4px solid #bbb;
    border-top: 0;
  }

  .on {
    background: #c3e1e7;
  }

  /* title and tabs */
  header {
    height: 70px;
    background: linear-gradient(90deg, #0a638b, #0877a2);
    color: #f0f7fa;
  }

  .titlebar {
    display: flex;
    align-items: center;
    height: 39px;
  }

  .logo {
    width: 46px;
    padding-left: 2px;
    font-size: 24px;
    line-height: 30px;
  }

  .quick {
    width: 31px;
  }

  .quick + .quick {
    margin-right: 8px;
  }

  .menus {
    display: grid;
    grid-template-columns: 58px 59px 60px 59px 60px 59px 55px 65px 72px 87px 70px 60px 66px 16px;
  }

  .menus button {
    justify-content: flex-start;
    gap: 7px;
  }

  .menus .panes {
    gap: 4px;
  }

  .app-title {
    margin-left: auto;
    margin-right: 54px;
    font-size: 13px;
  }

  .controls {
    display: flex;
    gap: 12px;
    margin-right: 8px;
  }

  .tabbar {
    display: flex;
    height: 29px;
    font-size: 14px;
  }

  .tabbar > button {
    padding-bottom: 2px;
  }

  .file {
    width: 86px;
  }

  .home {
    width: 77px;
    margin-right: -7px;
  }

  .tabbar .cam {
    width: 92px;
    border-bottom: 2px solid #e3d46a;
    color: #e8d763;
  }

  .search {
    display: flex;
    box-sizing: border-box;
    width: 192px;
    height: 22px;
    margin: 3px 10px 0 auto;
    padding-right: 2px;
    background: #fff;
  }

  .search input {
    flex: 1;
    min-width: 0;
    padding: 0 1px;
    border: 0;
    outline: 0;
    font: inherit;
    font-size: 12px;
  }

  .search input::placeholder {
    color: #999;
  }

  .tab-tools {
    display: flex;
    gap: 11px;
    margin-right: 6px;
  }

  /* ribbon */
  .ribbon {
    display: flex;
    height: 101px;
    border-bottom: 1px solid #d4d4d4;
  }

  .group {
    display: flex;
    flex-direction: column;
    box-sizing: border-box;
    padding-top: 1px;
    border-right: 1px solid #e2e2e2;
  }

  .group footer {
    position: relative;
    display: flex;
    justify-content: center;
    align-items: center;
    gap: 6px;
    margin-top: auto;
    height: 20px;
    color: #1c718a;
  }

  .group footer .caret {
    color: #222;
  }

  .curve footer .caret,
  .stars footer .caret,
  .display footer .caret,
  .rest footer .caret {
    position: absolute;
    right: 8px;
  }

  .tools {
    display: grid;
    grid-auto-rows: 25px;
  }

  .tools button {
    justify-content: flex-start;
    gap: 4px;
  }

  .curve {
    flex: 1;
    min-width: 630px;
  }

  .group.curve footer,
  .group.stars footer,
  .group.display footer {
    padding-right: 17px;
  }

  .curve .tools {
    padding-left: 12px;
    grid-template-columns: 74px 91px 80px 80px 79px 108px 104px;
  }

  .edit {
    width: 70px;
  }

  .sync {
    width: 69px;
  }

  .edit footer,
  .sync footer {
    padding-right: 4px;
  }

  .edit .tools,
  .sync .tools {
    padding-left: 13px;
    grid-template-columns: 27px 26px;
  }

  .stars {
    width: 277px;
  }

  .stars .tools {
    padding-left: 14px;
    grid-template-columns: 79px 128px 27px 27px;
  }

  .display {
    width: 99px;
  }

  .rest {
    width: 50px;
    border-right: 0;
  }

  .big {
    display: flex;
    gap: 11px;
    padding-left: 10px;
  }

  .big button {
    flex-direction: column;
    gap: 2px;
  }

  .big .caret {
    margin-top: 2px;
  }

  /* selection bar */
  .selection {
    display: flex;
    align-items: center;
    box-sizing: border-box;
    height: 51px;
    padding-top: 1px;
    border-bottom: 1px solid #c4c4c4;
  }

  .main-menu {
    gap: 8px;
    width: 105px;
    height: 42px;
    border-right: 1px solid #e2e2e2;
  }

  .combo {
    position: relative;
    height: 24px;
  }

  .combo select {
    appearance: none;
    box-sizing: border-box;
    width: 100%;
    height: 24px;
    padding: 0 2px;
    border: 1px solid #666;
    border-radius: 0;
    background: #fff;
    color: inherit;
    font: inherit;
  }

  .combo .caret {
    position: absolute;
    right: 5px;
    top: 10px;
    border-width: 5px 4px 0;
  }

  .filter {
    width: 161px;
    margin-left: 14px;
  }

  .scope {
    width: 169px;
  }

  .funnel {
    width: 47px;
  }

  .tile {
    width: 36px;
    height: 34px;
  }

  .tile.list {
    width: 40px;
  }

  .dim {
    opacity: 0.35;
  }

  .tiles {
    display: flex;
    margin: 0 4px 0 7px;
  }

  .tiles.shades {
    padding-right: 5px;
    margin-right: 0;
    border-right: 1px solid #e2e2e2;
  }

  .mcs {
    display: flex;
    align-items: center;
    gap: 2px;
    height: 48px;
    padding: 0 8px 0 9px;
    border-right: 1px solid #e2e2e2;
  }

  .pair button {
    width: 26px;
    height: 24px;
  }

  .wcs {
    gap: 5px;
    margin-left: 9px;
  }

  .model {
    gap: 3px;
    margin-left: 9px;
  }

  .orient {
    margin-left: 10px;
  }

  .orient button {
    gap: 4px;
    height: 24px;
  }

  .end {
    display: flex;
    justify-content: flex-end;
    align-items: flex-end;
    box-sizing: border-box;
    height: 44px;
    width: 44px;
    margin-left: auto;
    padding: 0 7px 5px 0;
    border-left: 1px solid #e2e2e2;
  }

  /* work area */
  main {
    display: flex;
    flex: 1;
  }

  .stage {
    display: flex;
    flex-direction: column;
    flex: 1;
    min-width: 0;
  }

  .docs {
    display: flex;
    height: 27px;
    border-bottom: 2px solid #065d82;
    font-size: 13px;
  }

  .doc {
    gap: 6px;
    padding: 0 7px 0 4px;
  }

  .doc.open {
    background: #05638b;
    color: #fff;
  }

  .doc.find {
    margin-left: 18px;
  }

  .viewport {
    display: block;
    flex: 1;
    width: 100%;
    min-height: 0;
    height: 0;
  }

  .side {
    display: flex;
    flex-direction: column;
    align-items: center;
    width: 54px;
    border-right: 1px solid #c4c4c4;
  }

  .stack {
    display: grid;
    grid-auto-rows: 1fr;
  }

  .high {
    height: 382px;
    margin-top: 8px;
  }

  .low {
    height: 278px;
    margin-top: 9px;
  }

  .twin {
    display: flex;
    gap: 7px;
    height: 26px;
  }

  .side hr {
    width: 48px;
    margin: 3px 0 0;
    border: 0;
    border-top: 1px solid #dcdcdc;
  }

  .side .caret {
    margin: 35px 30px 0 0;
  }

  .navigator {
    position: relative;
    width: 467px;
  }

  .navigator > hr {
    margin: 6px 8px 0 10px;
    border: 0;
    border-top: 1px solid #c8c8c8;
  }

  .navigator h2 {
    display: flex;
    align-items: center;
    gap: 10px;
    margin: 0;
    padding: 8px 0 0 12px;
    font-size: 13px;
    font-weight: 400;
  }

  .nav-tools {
    display: flex;
    gap: 2px;
    padding: 10px 0 3px 14px;
  }

  .nav-tools button {
    box-sizing: border-box;
    width: 35px;
    height: 35px;
  }

  .nav-tools .on {
    background: #8cc2d0;
  }

  .nav-tools .boxed {
    border: 1px solid #555;
    margin-left: 2px;
  }

  .nav-tools .off {
    opacity: 0.4;
  }

  .table-box {
    margin: 1px 15px 0 17px;
    padding-bottom: 3px;
    border: 1px solid #e0e0e0;
    border-top: 0;
    background: linear-gradient(#f0f0f0 25px, #fff 25px);
  }

  .table-main {
    display: flex;
    gap: 3px;
  }

  table {
    flex: 1;
    height: 679px;
    border-collapse: separate;
    border-spacing: 0;
    table-layout: fixed;
    font-size: 13px;
    line-height: 18px;
  }

  .c1 {
    width: 218px;
  }

  .c2 {
    width: 47px;
  }

  .c3 {
    width: 42px;
  }

  .c4 {
    width: 44px;
  }

  th {
    height: 24px;
    padding: 1px 0 0 6px;
    box-sizing: border-box;
    border-right: 1px solid #d8d8d8;
    border-bottom: 1px solid #ddd;
    background: #f0f0f0;
    font-weight: 400;
    text-align: left;
    white-space: nowrap;
  }

  th:first-child {
    padding-left: 7px;
  }

  th:last-child {
    border-right: 0;
  }

  td {
    padding: 0 0 0 6px;
    border-right: 1px solid #ebebeb;
    border-bottom: 1px solid #ededed;
    white-space: nowrap;
    overflow: hidden;
  }

  td svg {
    display: block;
    flex: none;
  }

  tbody tr:nth-child(odd) td {
    background: #fafafa;
  }

  td.title {
    padding: 0;
    border-right: 1px solid #111;
    border-bottom-color: #f2f2f2;
  }

  .node {
    display: flex;
    align-items: center;
    height: 20px;
  }

  .state {
    overflow: visible;
  }

  .node .icon {
    margin: 0 2px 0 1px;
  }

  .name {
    flex: 1;
    padding-left: 1px;
    line-height: 20px;
  }

  tbody tr.selected td:not(.title),
  .selected .name {
    background: #8cc2d0;
  }

  .blue {
    color: #7a70cc;
  }

  .tool {
    padding-left: 5px;
  }

  .swap {
    margin-left: 2px;
  }

  .vbar {
    display: flex;
    flex-direction: column;
    align-items: center;
    justify-content: space-between;
    width: 16px;
    margin-top: 25px;
    padding: 8px 1px 6px 0;
    background: #f0f0f0;
    box-sizing: border-box;
  }

  .vbar span {
    width: 16px;
    height: 393px;
    margin-top: -70px;
    background: #c9c9c9;
  }

  .hbar {
    display: flex;
    align-items: center;
    height: 16px;
    margin-top: 2px;
    padding: 0 25px 0 7px;
    background: #f0f0f0;
  }

  .hbar span {
    width: 150px;
    height: 16px;
    margin-left: 5px;
    background: #c9c9c9;
  }

  .chev {
    width: 5px;
    height: 5px;
    border: solid #444;
    border-width: 2px 2px 0 0;
  }

  .chev.up {
    transform: rotate(-45deg);
  }

  .chev.down {
    transform: rotate(135deg);
  }

  .chev.back {
    transform: rotate(-135deg);
  }

  .chev.next {
    margin-left: auto;
    transform: rotate(45deg);
  }

  /* menus over the navigator */
  .popup {
    position: absolute;
    box-sizing: border-box;
    margin: 0;
    padding: 2px 4px;
    border: 1px solid #b4b4b4;
    background: #fff;
    list-style: none;
    z-index: 2;
  }

  .popup button {
    justify-content: flex-start;
    gap: 7px;
    width: 100%;
    height: 26px;
    padding-left: 1px;
  }

  .popup .caret {
    margin-left: auto;
    margin-right: 4px;
  }

  .popup .active {
    background: #b0d8e2;
  }

  .popup .strong {
    font-weight: 700;
  }

  .popup .sep {
    height: 10px;
    margin: 0 5px 0 10px;
    background: linear-gradient(#ddd, #ddd) center / 100% 1px no-repeat;
  }

  .context {
    left: 140px;
    top: 109px;
    width: 104px;
  }

  .submenu {
    left: 242px;
    top: 448px;
    width: 139px;
    padding: 3px 4px;
    z-index: 3;
  }

  .pencil {
    position: absolute;
    left: 199px;
    top: 462px;
    z-index: 4;
  }

  .resources {
    display: flex;
    flex-direction: column;
    width: 35px;
    background: #dcdcdc;
  }

  .resources > button {
    height: 30px;
    width: 32px;
  }

  .res-high {
    margin-top: 15px;
  }

  .res-high button {
    width: 31px;
    height: 46px;
  }

  .res-high .current {
    background: #fff;
  }

  .res-low {
    margin: 6px 0 auto;
  }

  .res-low button {
    width: 31px;
    height: 58px;
  }

  .res-low .tight {
    height: 43px;
  }

  .res-end {
    display: flex;
    flex-direction: column;
    align-items: center;
    gap: 13px;
    width: 31px;
    padding-bottom: 6px;
  }

  .bottom {
    display: flex;
    justify-content: space-between;
    align-items: center;
    height: 38px;
    padding-right: 6px;
    border-bottom: 1px solid #c8c8c8;
  }

  .bottom-tools {
    display: flex;
    padding: 0 4px 0 5px;
    border-right: 1px solid #e0e0e0;
  }

  .bottom-tools button {
    width: 36px;
    height: 28px;
  }

  .bottom > .caret {
    margin-top: 14px;
  }

  .status {
    height: 23px;
    padding-left: 3px;
    line-height: 23px;
  }
</style>
